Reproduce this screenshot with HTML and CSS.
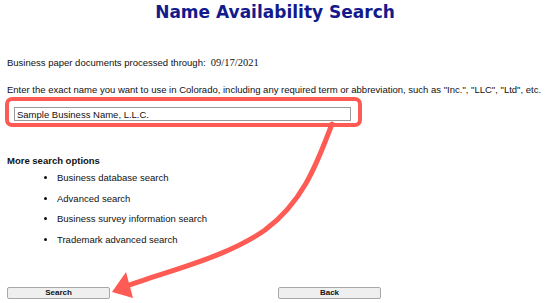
FILE: index.html
```html
<!DOCTYPE html>
<html>
<head>
<meta charset="utf-8">
<link rel="stylesheet" href="styles.css">
</head>
<body>
<div class="page">
  <h1 class="title">Name Availability Search</h1>
  <p class="processed">Business paper documents processed through:&nbsp; <span class="date">09/17/2021</span></p>
  <p class="instruct">Enter the exact name you want to use in Colorado, including any required term or abbreviation, such as "Inc.", "LLC", "Ltd", etc.</p>
  <div class="field-row"><input class="name-input" type="text" value="Sample Business Name, L.L.C."></div>
  <h2 class="more">More search options</h2>
  <ul class="options">
    <li>Business database search</li>
    <li>Advanced search</li>
    <li>Business survey information search</li>
    <li>Trademark advanced search</li>
  </ul>
  <div class="buttons">
    <button class="btn">Search</button>
    <button class="btn">Back</button>
  </div>
  <svg class="annot" width="550" height="303" viewBox="0 0 550 303">
    <rect x="7" y="99" width="353" height="26" rx="5" ry="5" fill="none" stroke="#fd5b54" stroke-width="4"/>
    <path d="M332,124 C318,160 305,200 265,230 C225,258 170,270 124,287" fill="none" stroke="#fd5b54" stroke-width="5" stroke-linecap="round"/>
    <polygon points="112,292 126,272 133,298" fill="#fd5b54"/>
  </svg>
</div>
</body>
</html>
```
FILE: styles.css
```css
html, body {
  margin: 0;
  padding: 0;
  background: #ffffff;
}
.page {
  position: relative;
  width: 550px;
  height: 303px;
  padding: 0 7px;
  box-sizing: border-box;
  font-family: "Liberation Sans", Arial, sans-serif;
  font-size: 9.5px;
  color: #111111;
  overflow: hidden;
}
.title {
  margin: 0;
  padding-top: 0;
  font-family: "DejaVu Sans", Verdana, sans-serif;
  font-weight: bold;
  font-size: 17px;
  line-height: 24px;
  text-align: center;
  color: #121a8c;
}
.processed {
  margin: 33px 0 0;
  line-height: 12px;
}
.date {
  font-family: "Liberation Serif", "Times New Roman", serif;
  font-size: 10.5px;
}
.instruct {
  margin: 15px 0 0;
  line-height: 12px;
  white-space: nowrap;
}
.field-row {
  margin-top: 11px;
  padding-left: 7px;
  display: flex;
}
.name-input {
  width: 337px;
  height: 14px;
  box-sizing: border-box;
  margin: 0;
  padding: 0 2px;
  border: 1px solid #9a9a9a;
  font-family: "Liberation Sans", Arial, sans-serif;
  font-size: 9.5px;
  color: #111111;
  background: #fff;
}
.more {
  margin: 34px 0 0;
  font-size: 9.5px;
  line-height: 12px;
  font-weight: bold;
}
.options {
  margin: 5px 0 0;
  padding-left: 50px;
  list-style: disc;
}
.options li {
  line-height: 12px;
  margin-bottom: 8.5px;
}
.buttons {
  position: absolute;
  left: 7px;
  top: 287px;
  display: flex;
  gap: 168px;
}
.btn {
  width: 103px;
  height: 12px;
  box-sizing: border-box;
  margin: 0;
  padding: 0;
  border: 1px solid #a8a8a8;
  border-radius: 2px;
  background: #efefef;
  font-family: "Liberation Sans", Arial, sans-serif;
  font-size: 8px;
  font-weight: bold;
  line-height: 10px;
  color: #111;
}
.annot {
  position: absolute;
  left: 0;
  top: 0;
  pointer-events: none;
}
```
